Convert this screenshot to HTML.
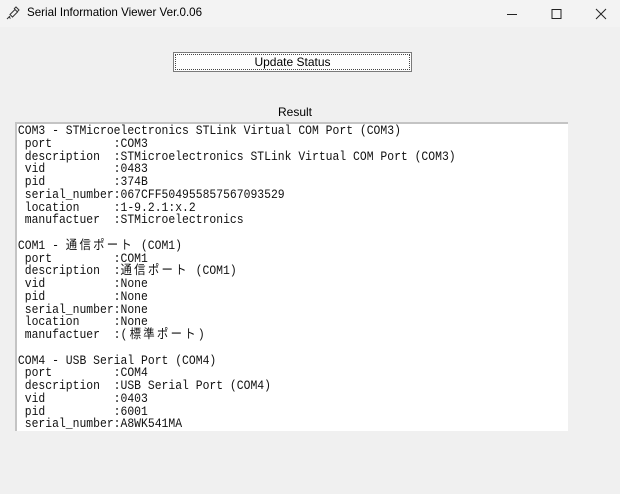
<!DOCTYPE html>
<html><head><meta charset="utf-8"><style>
html,body{margin:0;padding:0;width:620px;height:494px;background:#f0f0f0;overflow:hidden;font-family:"Liberation Sans","Noto Sans CJK JP",sans-serif;}
.title{position:absolute;left:0;top:0;width:620px;height:27px;background:#f3f3f3;}
.title .t{position:absolute;left:27px;top:6px;font-size:11.6px;color:#000;}
.btn{position:absolute;left:173px;top:52px;width:237px;height:18px;background:#fdfdfd;border:1px solid #7a7a7a;outline:1px dotted #444;outline-offset:-3px;font-size:12px;text-align:center;line-height:18px;}
.lbl{position:absolute;left:278px;top:105px;font-size:12px;}
.box{position:absolute;left:15px;top:122px;width:553px;height:309px;background:#fff;border-top:2px solid #c4c4c4;border-left:2px solid #c4c4c4;box-sizing:border-box;overflow:hidden;}
pre{margin:0;padding:1px 0 0 1px;font-family:"Liberation Mono","Noto Sans CJK JP",monospace;font-size:12.6px;line-height:12.75px;color:#111;transform:scaleX(0.905);transform-origin:0 0;}
.j{letter-spacing:2.5px;}
</style></head><body>
<div class="title">
<svg style="position:absolute;left:5px;top:5px" width="16" height="16" viewBox="0 0 16 16" fill="none" stroke="#333" stroke-width="1"><path d="M2 14l3-3M4 12l1.5 1.5M5 9.5l5-5 2.5 2.5-5 5zM9 4l2-2 3 3-2 2M11.5 2.5l2 2"/></svg>
<div class="t">Serial Information Viewer Ver.0.06</div>
<svg style="position:absolute;left:500px;top:7px" width="116" height="14" viewBox="0 0 116 14" fill="none" stroke="#222" stroke-width="1"><path d="M7 7.5h10"/><path d="M52 2.5h9v9h-9z"/><path d="M96 2l10 10M106 2l-10 10"/></svg>
</div>
<div class="btn">Update Status</div>
<div class="lbl">Result</div>
<div class="box"><pre>COM3 - STMicroelectronics STLink Virtual COM Port (COM3)
 port         :COM3
 description  :STMicroelectronics STLink Virtual COM Port (COM3)
 vid          :0483
 pid          :374B
 serial_number:067CFF504955857567093529
 location     :1-9.2.1:x.2
 manufactuer  :STMicroelectronics

COM1 - <span class="j">通信ポート</span> (COM1)
 port         :COM1
 description  :<span class="j">通信ポート</span> (COM1)
 vid          :None
 pid          :None
 serial_number:None
 location     :None
 manufactuer  :<span class="j">(標準ポート)</span>

COM4 - USB Serial Port (COM4)
 port         :COM4
 description  :USB Serial Port (COM4)
 vid          :0403
 pid          :6001
 serial_number:A8WK541MA
</pre></div>
</body></html>
